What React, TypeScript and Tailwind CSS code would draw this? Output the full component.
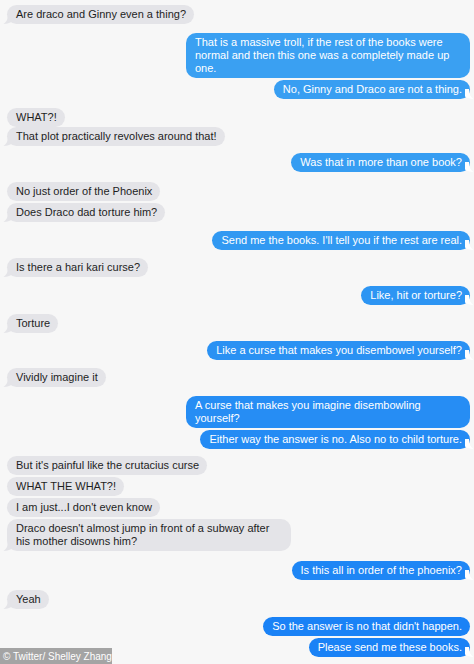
import React from 'react';

type Msg = {
  me: boolean;
  lines: string[];
  gap: number; // space above
  tail?: boolean;
  bg?: string;
};

const messages: Msg[] = [
  { me: false, lines: ['Are draco and Ginny even a thing?'], gap: 5, tail: true },
  {
    me: true,
    lines: [
      'That is a massive troll, if the rest of the books were',
      'normal and then this one was a completely made up',
      'one.',
    ],
    gap: 9,
    bg: 'bg-[#3aa0f2]',
  },
  { me: true, lines: ['No, Ginny and Draco are not a thing.'], gap: 2, tail: true, bg: 'bg-[#389ef2]' },
  { me: false, lines: ['WHAT?!'], gap: 9 },
  { me: false, lines: ['That plot practically revolves around that!'], gap: 0, tail: true },
  { me: true, lines: ['Was that in more than one book?'], gap: 7, tail: true, bg: 'bg-[#369df2]' },
  { me: false, lines: ['No just order of the Phoenix'], gap: 10 },
  { me: false, lines: ['Does Draco dad torture him?'], gap: 2, tail: true },
  { me: true, lines: ["Send me the books. I'll tell you if the rest are real."], gap: 9, tail: true, bg: 'bg-[#3199f2]' },
  { me: false, lines: ['Is there a hari kari curse?'], gap: 8, tail: true },
  { me: true, lines: ['Like, hit or torture?'], gap: 9, tail: true, bg: 'bg-[#2d95f3]' },
  { me: false, lines: ['Torture'], gap: 9, tail: true },
  { me: true, lines: ['Like a curse that makes you disembowel yourself?'], gap: 8, tail: true, bg: 'bg-[#2a91f3]' },
  { me: false, lines: ['Vividly imagine it'], gap: 8, tail: true },
  {
    me: true,
    lines: ['A curse that makes you imagine disembowling', 'yourself?'],
    gap: 9,
    bg: 'bg-[#268df4]',
  },
  { me: true, lines: ['Either way the answer is no. Also no to child torture.'], gap: 2, tail: true, bg: 'bg-[#248bf4]' },
  { me: false, lines: ["But it's painful like the crutacius curse"], gap: 7 },
  { me: false, lines: ['WHAT THE WHAT?!'], gap: 2 },
  { me: false, lines: ["I am just...I don't even know"], gap: 2 },
  {
    me: false,
    lines: ["Draco doesn't almost jump in front of a subway after", 'his mother disowns him?'],
    gap: 2,
    tail: true,
  },
  { me: true, lines: ['Is this all in order of the phoenix?'], gap: 10, tail: true, bg: 'bg-[#1e86f5]' },
  { me: false, lines: ['Yeah'], gap: 10, tail: true },
  { me: true, lines: ["So the answer is no that didn't happen."], gap: 8, bg: 'bg-[#1a82f6]' },
  { me: true, lines: ['Please send me these books.'], gap: 2, tail: true, bg: 'bg-[#1a82f6]' },
];

const gapClass: Record<number, string> = {
  0: 'mt-0',
  2: 'mt-[2px]',
  5: 'mt-[5px]',
  7: 'mt-[7px]',
  8: 'mt-[8px]',
  9: 'mt-[9px]',
  10: 'mt-[10px]',
};

function Tail({ me, color }: { me: boolean; color: string }) {
  return (
    <svg
      viewBox="0 0 9 10"
      className={`absolute bottom-0 w-[9px] h-[10px] ${color} ${me ? 'right-[-4px]' : 'left-[-4px] -scale-x-100'}`}
    >
      <path d="M0 0 L4 0 C4 5 5.5 8 8.5 10 C5 10 2 9 0 7.5 Z" fill="currentColor" />
    </svg>
  );
}

function Bubble({ m }: { m: Msg }) {
  const multi = m.lines.length > 1;
  const bg = m.me ? m.bg ?? 'bg-[#2a91f3]' : 'bg-[#e4e4e8]';
  const tailColor = m.me ? bg.replace('bg-', 'text-') : 'text-[#e4e4e8]';
  return (
    <div className={`flex ${m.me ? 'justify-end' : 'justify-start'} ${gapClass[m.gap]}`}>
      <div
        className={`relative rounded-[10px] pl-[9px] pr-[8px] py-[3px] text-[11px] leading-[13px] whitespace-nowrap ${bg} ${
          m.me ? 'text-white' : 'text-[#1e1e1e]'
        } ${multi ? 'w-[284px]' : ''}`}
      >
        {m.lines.map((l, i) => (
          <div key={i}>{l}</div>
        ))}
        {m.tail && <Tail me={m.me} color={tailColor} />}
      </div>
    </div>
  );
}

export default function App() {
  return (
    <div
      className="relative w-[474px] h-[664px] overflow-hidden bg-[#f7f7f7]"
      style={{ fontFamily: '"Liberation Sans", Arial, sans-serif' }}
    >
      <div className="flex flex-col pl-[7px] pr-[4px]">
        {messages.map((m, i) => (
          <Bubble key={i} m={m} />
        ))}
      </div>
      <div className="absolute left-0 bottom-0 h-[16px] w-[112px] bg-[#8f8f8f]/80 flex items-center pl-[3px] text-[10px] text-white whitespace-nowrap">
        © Twitter/ Shelley Zhang
      </div>
    </div>
  );
}
